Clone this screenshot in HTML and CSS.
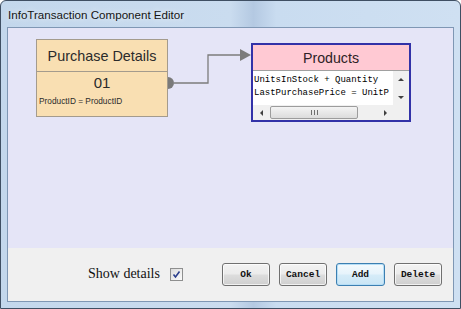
FILE: index.html
```html
<!DOCTYPE html>
<html>
<head>
<meta charset="utf-8">
<link rel="stylesheet" href="styles.css">
</head>
<body>
<div class="window">
  <div class="titlebar">InfoTransaction Component Editor</div>
  <div class="client">
    <div class="canvas">
      <svg class="wires" width="446" height="221" viewBox="0 0 446 221">
        <polyline points="166,55 200,55 200,27 234,27" fill="none" stroke="#7c7c7c" stroke-width="1.3"/>
        <polygon points="232,21 243,27 232,33" fill="#7c7c7c"/>
        <circle cx="160" cy="55" r="6" fill="#7a7a7a"/>
      </svg>
      <div class="node purchase">
        <div class="node-head">Purchase Details</div>
        <div class="node-body">
          <div class="node-num">01</div>
          <div class="node-rel">ProductID = ProductID</div>
        </div>
      </div>
      <div class="node products">
        <div class="prod-head">Products</div>
        <div class="listbox">
          <div class="lb-main">
            <div class="lb-items">
              <div class="lb-row">UnitsInStock + Quantity</div>
              <div class="lb-row">LastPurchasePrice = UnitP</div>
            </div>
            <div class="vscroll">
              <div class="sb-btn"><span class="tri up"></span></div>
              <div class="sb-btn"><span class="tri down"></span></div>
            </div>
          </div>
          <div class="hscroll">
            <div class="sb-btn"><span class="tri left"></span></div>
            <div class="thumb"><span class="grip"></span></div>
            <div class="track"></div>
            <div class="sb-btn"><span class="tri right"></span></div>
            <div class="corner"></div>
          </div>
        </div>
      </div>
    </div>
    <div class="panel">
      <span class="show-label">Show details</span>
      <span class="checkbox">
        <svg width="9" height="9" viewBox="0 0 9 9"><polyline points="1.5,4.5 3.5,7 7.5,1.5" fill="none" stroke="#2a3e8c" stroke-width="1.6"/></svg>
      </span>
      <div class="buttons">
        <button class="btn">Ok</button>
        <button class="btn">Cancel</button>
        <button class="btn focused">Add</button>
        <button class="btn">Delete</button>
      </div>
    </div>
  </div>
</div>
</body>
</html>
```
FILE: styles.css
```css
html, body {
  margin: 0;
  padding: 0;
  background: #ffffff;
}
.window {
  width: 461px;
  height: 309px;
  box-sizing: border-box;
  border: 1px solid #3f4f63;
  border-radius: 6px 6px 0 0;
  background: linear-gradient(90deg, #c3d7ec 0%, #cadcef 50%, #b4c9e2 55%, #c9dcf0 60%, #cfe0f2 100%);
  display: flex;
  flex-direction: column;
  padding: 0 6px 6px 6px;
  overflow: hidden;
}
.titlebar {
  height: 26px;
  line-height: 27px;
  padding-left: 1px;
  font-family: "Liberation Sans", Arial, sans-serif;
  font-size: 11.6px;
  color: #151515;
  text-shadow: 0 0 6px rgba(255,255,255,0.9);
}
.client {
  flex: 1;
  border: 1px solid #7f97b4;
  display: flex;
  flex-direction: column;
  background: #f0f0f0;
}
.canvas {
  flex: 1;
  position: relative;
  background: #e5e5f7;
}
.wires {
  position: absolute;
  left: 0;
  top: 0;
}
.node {
  position: absolute;
  box-sizing: border-box;
  font-family: "Liberation Sans", Arial, sans-serif;
}
.purchase {
  left: 28px;
  top: 11px;
  width: 132px;
  height: 78px;
  border: 1px solid #a49b8d;
  background: #f9dfb2;
  display: flex;
  flex-direction: column;
}
.node-head {
  height: 32px;
  border-bottom: 1px solid #a49b8d;
  display: flex;
  align-items: center;
  justify-content: center;
  font-size: 14.4px;
  color: #2b2b2b;
  padding-top: 1px;
  box-sizing: border-box;
}
.node-body {
  flex: 1;
  display: flex;
  flex-direction: column;
}
.node-num {
  text-align: center;
  font-size: 15px;
  color: #2b2b2b;
  margin-top: 2px;
  line-height: 18px;
}
.node-rel {
  font-size: 8.3px;
  color: #2b2b2b;
  padding-left: 2px;
  margin-top: 4px;
}
.products {
  left: 243px;
  top: 15px;
  width: 160px;
  height: 79px;
  border: 2px solid #3232a8;
  background: #ffffff;
  display: flex;
  flex-direction: column;
}
.prod-head {
  height: 25px;
  background: #ffc9d3;
  display: flex;
  align-items: center;
  justify-content: center;
  font-size: 14.2px;
  color: #2e2226;
  padding-top: 1px;
  box-sizing: border-box;
}
.listbox {
  flex: 1;
  display: flex;
  flex-direction: column;
  border-top: 1px solid #a0a0a0;
  overflow: hidden;
}
.lb-main {
  flex: 1;
  display: flex;
  min-height: 0;
}
.lb-items {
  flex: 1;
  overflow: hidden;
  padding: 3px 0 0 1px;
  font-family: "Liberation Mono", "Courier New", monospace;
  font-size: 9px;
  line-height: 13px;
  color: #000;
  white-space: nowrap;
}
.vscroll {
  width: 16px;
  background: #f0f0f0;
  display: flex;
  flex-direction: column;
  justify-content: space-between;
}
.vscroll .sb-btn {
  height: 16px;
}
.sb-btn {
  width: 16px;
  display: flex;
  align-items: center;
  justify-content: center;
  background: #f0f0f0;
}
.tri {
  width: 0;
  height: 0;
  border-style: solid;
  border-color: transparent;
}
.tri.up { border-width: 0 3px 3px 3px; border-bottom-color: #404040; }
.tri.down { border-width: 3px 3px 0 3px; border-top-color: #404040; }
.tri.left { border-width: 3px 3px 3px 0; border-right-color: #404040; }
.tri.right { border-width: 3px 0 3px 3px; border-left-color: #404040; }
.hscroll {
  height: 15px;
  display: flex;
  background: #f0f0f0;
}
.thumb {
  width: 88px;
  margin: 1px 1px;
  box-sizing: border-box;
  border: 1px solid #9c9c9c;
  border-radius: 2px;
  background: linear-gradient(#f4f4f4, #dcdcdc);
  display: flex;
  align-items: center;
  justify-content: center;
}
.grip {
  width: 7px;
  height: 5px;
  background: repeating-linear-gradient(90deg, #707070 0 1px, transparent 1px 3px);
}
.track {
  flex: 1;
}
.corner {
  width: 16px;
  background: #f0f0f0;
}
.panel {
  height: 53px;
  display: flex;
  align-items: center;
  padding: 0 11px 0 80px;
  background: #f0f0f0;
}
.show-label {
  font-family: "Liberation Serif", "Times New Roman", serif;
  font-size: 14px;
  color: #111;
  margin-top: -2px;
}
.checkbox {
  width: 11px;
  height: 11px;
  margin-left: 10px;
  border: 1px solid #8e8f8f;
  background: linear-gradient(135deg, #dcdcdc, #fbfbfb);
  display: flex;
  align-items: center;
  justify-content: center;
}
.buttons {
  display: flex;
  gap: 9px;
  margin-left: auto;
}
.btn {
  width: 48px;
  height: 23px;
  padding: 0;
  border: 1px solid #707070;
  border-radius: 3px;
  background: linear-gradient(#f3f3f3 0%, #ebebeb 48%, #dddddd 52%, #cfcfcf 100%);
  box-shadow: inset 0 0 0 1px rgba(255,255,255,0.7);
  font-family: "Liberation Mono", "Courier New", monospace;
  font-weight: bold;
  font-size: 9.5px;
  color: #111;
}
.btn.focused {
  width: 49px;
  border-color: #3c7fb1;
  background: linear-gradient(#f4fafd 0%, #e6f3fb 48%, #d6ecf8 52%, #c9e5f5 100%);
  box-shadow: inset 0 0 0 1px #b6def6;
}
```
